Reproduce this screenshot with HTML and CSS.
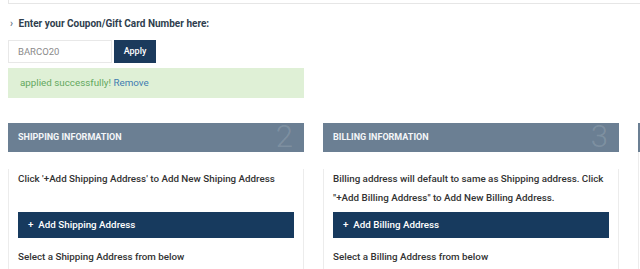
FILE: index.html
```
<!DOCTYPE html>
<html>
<head>
<title>Checkout</title>
<link rel="stylesheet" href="styles.css">
</head>
<body>
<div class="page">
<div class="topbox"></div>

<div class="coupon">
<div class="coupon-label"><span class="chev">&rsaquo;</span> Enter your Coupon/Gift Card Number here:</div>
<div class="coupon-form">
<div class="coupon-input">BARCO20</div>
<div class="coupon-apply">Apply</div>
</div>
<div class="alert-ok">applied successfully! <a class="remove" href="#">Remove</a></div>
</div>

<div class="steps">
<div class="step">
<div class="step-head"><span class="step-title">Shipping Information</span><span class="step-nr">2</span></div>
<div class="step-body">
<p class="step-text">Click '+Add Shipping Address' to Add New Shiping Address</p>
<div class="step-spacer"></div>
<div class="add-btn">+&nbsp; Add Shipping Address</div>
<p class="step-select">Select a Shipping Address from below</p>
</div>
</div>
<div class="step">
<div class="step-head"><span class="step-title">Billing Information</span><span class="step-nr">3</span></div>
<div class="step-body">
<p class="step-text">Billing address will default to same as Shipping address. Click "+Add Billing Address" to Add New Billing Address.</p>
<div class="add-btn">+&nbsp; Add Billing Address</div>
<p class="step-select">Select a Billing Address from below</p>
</div>
</div>
<div class="step">
<div class="step-head"></div>
<div class="step-body"></div>
</div>
</div>
</div>
</body>
</html>
```

FILE: styles.css
```
/* checkout page */

body
{ margin: 0;
background: #fff;
font-family: Roboto, "Liberation Sans", sans-serif;
overflow: hidden;
}

div.page
{ padding: 0 0 0 8px;
}

div.topbox
{ height: 3px;
border: 1px solid #e6e6e6;
border-top: none;
margin-right: -10px;
}

/* Coupon */

div.coupon
{ width: 296px;
}

div.coupon-label
{ margin-top: 14px;
padding-left: 2px;
font-size: 10px;
font-weight: 700;
color: #2f3e4e;
line-height: 12px;
}

span.chev
{ color: #6a7a8a;
margin-right: 3px;
}

div.coupon-form
{ display: flex;
margin-top: 10px;
height: 23px;
}

div.coupon-input
{ width: 93px;
border: 1px solid #e8e8e8;
padding-left: 9px;
font-size: 9.5px;
line-height: 21px;
color: #8a8a8a;
}

div.coupon-apply
{ width: 42px;
margin-left: 2px;
background: #1b3a5c;
color: #fff;
font-size: 9px;
font-weight: 500;
text-align: center;
line-height: 23px;
}

div.alert-ok
{ margin-top: 5px;
height: 30px;
background: #dff0d6;
padding-left: 12px;
font-size: 9.8px;
line-height: 30px;
color: #63a85e;
}

a.remove
{ color: #3f7cb0;
text-decoration: none;
}

/* Steps */

div.steps
{ display: flex;
gap: 19px;
margin-top: 25px;
}

div.step
{ flex: 0 0 296px;
}

div.step-head
{ position: relative;
height: 29px;
background: #6b7f93;
}

span.step-title
{ display: block;
padding-left: 10px;
font-size: 9px;
font-weight: 700;
color: #f4f6f8;
text-transform: uppercase;
line-height: 29px;
}

span.step-nr
{ position: absolute;
right: 11px;
top: -1px;
font-size: 31px;
font-weight: 300;
color: rgba(255,255,255,0.15);
line-height: 30px;
}

div.step-body
{ border: 1px solid #ececec;
border-top: none;
padding: 0 9px;
height: 130px;
}

p.step-text
{ margin: 17px 0 0 0;
font-size: 9.8px;
font-weight: 500;
color: #333;
line-height: 19px;
}

div.step-spacer
{ height: 19px;
}

div.add-btn
{ margin-top: 5px;
height: 26px;
background: #173a5e;
color: #fff;
font-size: 9.8px;
font-weight: 500;
line-height: 26px;
padding-left: 10px;
}

p.step-select
{ margin: 13px 0 0 0;
font-size: 9.8px;
font-weight: 500;
color: #333;
}
```
